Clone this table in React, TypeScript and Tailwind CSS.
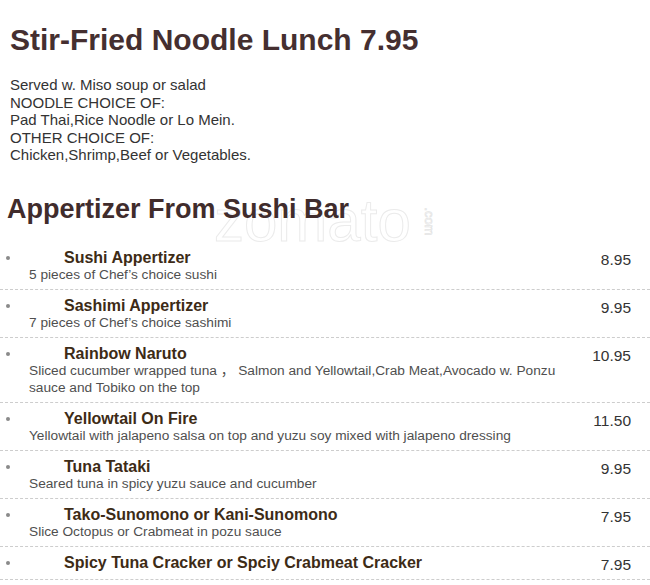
import React from "react";

type Item = { name: string; desc?: string[]; price: string };

const items: Item[] = [
  { name: "Sushi Appertizer", desc: ["5 pieces of Chef\u2019s choice sushi"], price: "8.95" },
  { name: "Sashimi Appertizer", desc: ["7 pieces of Chef\u2019s choice sashimi"], price: "9.95" },
  {
    name: "Rainbow Naruto",
    desc: [
      "Sliced cucumber wrapped tuna \uFF0C Salmon and Yellowtail,Crab Meat,Avocado w. Ponzu",
      "sauce and Tobiko on the top",
    ],
    price: "10.95",
  },
  {
    name: "Yellowtail On Fire",
    desc: ["Yellowtail with jalapeno salsa on top and yuzu soy mixed with jalapeno dressing"],
    price: "11.50",
  },
  { name: "Tuna Tataki", desc: ["Seared tuna in spicy yuzu sauce and cucumber"], price: "9.95" },
  { name: "Tako-Sunomono or Kani-Sunomono", desc: ["Slice Octopus or Crabmeat in pozu sauce"], price: "7.95" },
  { name: "Spicy Tuna Cracker or Spciy Crabmeat Cracker", price: "7.95" },
];

export default function App() {
  return (
    <div className="relative w-[650px] h-[585px] overflow-hidden bg-white font-['Liberation_Sans','Noto_Sans_CJK_SC',Arial,sans-serif]">
      {/* watermark */}
      <div className="absolute left-[214px] top-[186px] flex items-center pointer-events-none select-none">
        <span className="text-[60px] leading-[70px] text-transparent [-webkit-text-stroke:1px_#ebebeb]">zomato</span>
        <span className="ml-[4px] text-[13px] leading-none text-transparent [-webkit-text-stroke:0.7px_#e4e4e4] rotate-90 inline-block">.com</span>
      </div>

      <div className="relative pl-[10px] pt-[23px]">
        <h1 className="text-[30px] leading-[34px] font-bold text-[#452f30]">Stir-Fried Noodle Lunch 7.95</h1>
        <div className="mt-[19px] text-[15px] leading-[17.5px] text-[#333333]">
          <div>Served w. Miso soup or salad</div>
          <div>NOODLE CHOICE OF:</div>
          <div>Pad Thai,Rice Noodle or Lo Mein.</div>
          <div>OTHER CHOICE OF:</div>
          <div>Chicken,Shrimp,Beef or Vegetables.</div>
        </div>
      </div>

      <h2 className="relative mt-[29px] pl-[7px] text-[27px] leading-[32px] font-bold text-[#402c2c]">
        Appertizer From Sushi Bar
      </h2>

      <div className="relative mt-[17px]">
        {items.map((it, i) => (
          <div
            key={i}
            className={`border-b border-dashed border-[#cdcdcd] pt-[8px] ${it.desc ? "pb-[6px]" : "pb-[8px]"}`}
          >
            <div className="flex items-start h-[16px] pr-[19px]">
              <span className="ml-[6px] mt-[6px] w-[4px] h-[4px] rounded-full bg-[#8a8a8a] shrink-0" />
              <span className="ml-[54px] flex-1 text-[16px] leading-[16px] font-bold text-[#3d2b16]">{it.name}</span>
              <span className="relative top-[2px] text-[15.5px] leading-[16px] text-[#333333]">{it.price}</span>
            </div>
            {it.desc && (
              <div className="pl-[29px] text-[13.7px] leading-[17px] text-[#4f4f4f]">
                {it.desc.map((d, j) => (
                  <div key={j} className="whitespace-pre">{d}</div>
                ))}
              </div>
            )}
          </div>
        ))}
      </div>
    </div>
  );
}
